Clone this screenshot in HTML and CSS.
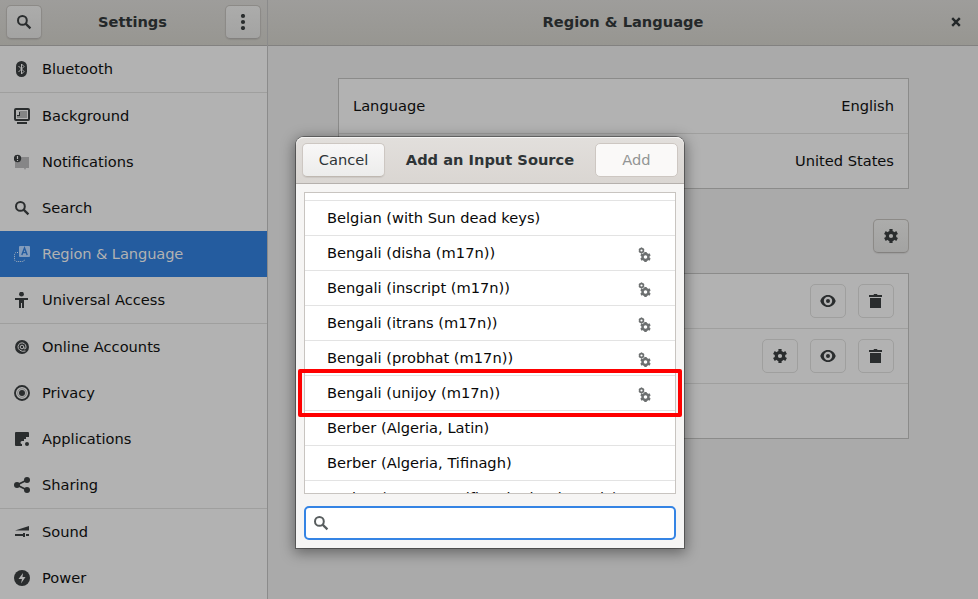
FILE: index.html
```html
<!DOCTYPE html>
<html lang="en">

<head>
    <meta charset="UTF-8">
    <meta name="viewport" content="width=device-width, initial-scale=1.0">
    <title>Region &amp; Language</title>
    <link rel="stylesheet" href="styles.css">
</head>

<body>
    <!-- shared icon shapes -->
    <svg class="sprite" aria-hidden="true">
        <symbol id="i-search" viewBox="0 0 16 16">
            <circle cx="6.4" cy="6.4" r="4.4" fill="none" stroke="currentColor" stroke-width="2" />
            <path d="M9.6 9.6 14.4 14.4" fill="none" stroke="currentColor" stroke-width="2.2" />
        </symbol>
        <symbol id="i-gear" viewBox="0 0 16 16">
            <circle cx="8" cy="8" r="3.7" fill="none" stroke="currentColor" stroke-width="3.2" />
            <path d="M8 1v2.5M8 12.5V15M1.9 4.5l2.2 1.3M11.9 10.2l2.2 1.3M1.9 11.5l2.2-1.3M11.9 5.8l2.2-1.3" fill="none" stroke="currentColor" stroke-width="3.2" />
        </symbol>
        <symbol id="i-gears" viewBox="0 0 14 16">
            <circle cx="3.5" cy="3.500" r="1.900" fill="none" stroke="currentColor" stroke-width="1.600" />
            <path d="M3.500.5v1M3.500 5.500v1M.9 2l.9.5M5.200 4.500l.9.5M.9 5l.9-.5M5.200 2.500l.9-.5" stroke="currentColor" stroke-width="1.400" />
            <circle cx="7.500" cy="10" r="3" fill="none" stroke="currentColor" stroke-width="2.400" />
            <path d="M7.500 5v2M7.500 13v2M2.900 7.400l1.800 1M10.300 11.600l1.800 1M2.900 12.600l1.800-1M10.300 8.400l1.800-1" stroke="currentColor" stroke-width="2.400" />
        </symbol>
        <symbol id="i-eye" viewBox="0 0 16 16">
            <path fill="currentColor" fill-rule="evenodd" d="M8 2C4.200 2 1.400 4.400.3 8c1.100 3.600 3.900 6 7.700 6s6.600-2.400 7.700-6C14.600 4.400 11.800 2 8 2zm0 1.800a4.200 4.200 0 1 1 0 8.400 4.200 4.200 0 0 1 0-8.400zm0 2.200a2 2 0 1 0 0 4 2 2 0 0 0 0-4z" />
        </symbol>
        <symbol id="i-trash" viewBox="0 0 16 16">
            <path fill="currentColor" d="M1 4V2h4.500L6 1h3l.5 1H14v2zM2 5h11v10H2z" />
        </symbol>
    </svg>

    <div class="window">
        <div class="sidebar">
            <div class="headerbar">
                <div class="btn"><svg class="icon"><use href="#i-search" /></svg></div>
                <h1>Settings</h1>
                <div class="btn">
                    <svg class="icon" viewBox="0 0 16 16" fill="currentColor"><circle cx="8" cy="2" r="2.1" /><circle cx="8" cy="8" r="2.1" /><circle cx="8" cy="14" r="2.1" /></svg>
                </div>
            </div>
            <ul class="nav">
                <li class="sep">
                    <svg class="icon" viewBox="0 0 16 16"><rect x="2" y="0" width="11" height="16" rx="5.5" fill="currentColor" /><path d="M4.500 5 10 10.500 7.500 13V3L10 5.500 4.500 11" fill="none" stroke="#b2b2b2" stroke-width="1" /></svg>
                    <span>Bluetooth</span>
                </li>
                <li>
                    <svg class="icon" viewBox="0 0 16 16"><rect x="1" y="1" width="14" height="11" rx="1" fill="none" stroke="currentColor" stroke-width="2" /><path d="M3 14h10v2H3z" fill="currentColor" /><path d="M4 3h9v7H3V8h3V4z" fill="currentColor" opacity=".35" /><path d="M6 4v4H3V7h2V4z" fill="currentColor" /></svg>
                    <span>Background</span>
                </li>
                <li>
                    <svg class="icon" viewBox="0 0 16 16"><path d="M7 3h8v11h-3l-1 2-1-2H1V8h4z" fill="currentColor" opacity=".32" /><circle cx="3.500" cy="4.500" r="3.700" fill="currentColor" /><path d="M3.500 2v3M3.500 6v1" stroke="#b2b2b2" stroke-width="1.200" /></svg>
                    <span>Notifications</span>
                </li>
                <li>
                    <svg class="icon"><use href="#i-search" /></svg>
                    <span>Search</span>
                </li>
                <li class="selected">
                    <svg class="icon" viewBox="0 0 16 16"><rect x="5" y="0" width="11" height="11" rx="1" fill="#a3b2c6" opacity=".75" /><path d="M7.800 9 10.500 2 13.200 9M8.800 6.600h3.500" fill="none" stroke="#245c9f" stroke-width="1.400" /><path d="M4 6.500H2.500Q.5 6.500.5 8.500V13q0 2.500 2.500 2.500h5q2.500 0 2.500-2.500" fill="none" stroke="#a9b2bd" stroke-width="1" stroke-dasharray="1 1" /></svg>
                    <span>Region &amp; Language</span>
                </li>
                <li class="sep">
                    <svg class="icon" viewBox="0 0 16 16" fill="currentColor"><circle cx="7.500" cy="2.200" r="2.400" /><path d="M1 6h13v2h-4v8H8v-5H7v5H5V8H1z" /></svg>
                    <span>Universal Access</span>
                </li>
                <li>
                    <svg class="icon" viewBox="0 0 16 16"><circle cx="8" cy="8" r="7" fill="currentColor" /><path d="M11.500 12Q8 13 5.800 11.200A4 4 0 1 1 12 8q0 2-1.200 2-1 0-1-2" fill="none" stroke="#b2b2b2" /><circle cx="8" cy="8" r="1.800" fill="none" stroke="#b2b2b2" /></svg>
                    <span>Online Accounts</span>
                </li>
                <li>
                    <svg class="icon" viewBox="0 0 16 16"><circle cx="8" cy="8" r="7" fill="none" stroke="currentColor" stroke-width="1.900" /><circle cx="8" cy="8" r="4.300" fill="none" stroke="currentColor" stroke-width=".6" opacity=".6" /><circle cx="8" cy="8" r="3" fill="currentColor" /></svg>
                    <span>Privacy</span>
                </li>
                <li>
                    <svg class="icon" viewBox="0 0 16 16" fill="currentColor"><path d="M2 1h12q1 0 1 1v4h-3v2h-2v2H8q-1.500 0-1.500 1.500T8 13v2H2q-1 0-1-1V2q0-1 1-1z" /><circle cx="13" cy="13" r="2" /></svg>
                    <span>Applications</span>
                </li>
                <li class="sep">
                    <svg class="icon" viewBox="0 0 16 16"><path d="M13 3 3 8l10 5" fill="none" stroke="currentColor" stroke-width="1.800" /><g fill="currentColor"><circle cx="13" cy="3" r="3" /><circle cx="3" cy="8" r="3" /><circle cx="13" cy="13" r="3" /></g></svg>
                    <span>Sharing</span>
                </li>
                <li>
                    <svg class="icon" viewBox="0 0 16 16" fill="currentColor"><path d="M1 6.500 15 2v4.500zM1 10h8v2H1zM9 9h2v4H9zM12 10h3v2h-3z" /></svg>
                    <span>Sound</span>
                </li>
                <li>
                    <svg class="icon" viewBox="0 0 16 16"><circle cx="8" cy="8" r="8" fill="currentColor" /><path d="M9 3 4.500 9H8l-1 4.500L11.500 7H8.500z" fill="#b2b2b2" /></svg>
                    <span>Power</span>
                </li>
            </ul>
        </div>

        <div class="main">
            <div class="headerbar">
                <h1>Region &amp; Language</h1>
                <svg class="close" viewBox="0 0 10 10"><path d="M1.200 1.200l7.600 7.600M8.800 1.200 1.200 8.800" stroke="currentColor" stroke-width="2.400" /></svg>
            </div>
            <div class="content">
                <div class="panel">
                    <div class="panel-row"><span>Language</span><span>English</span></div>
                    <div class="panel-row end"><span>United States</span></div>
                </div>
                <div class="sources-head">
                    <div class="btn"><svg class="icon"><use href="#i-gear" /></svg></div>
                </div>
                <div class="panel">
                    <div class="panel-row end">
                        <div class="flat"><svg class="icon"><use href="#i-eye" /></svg></div>
                        <div class="flat"><svg class="icon"><use href="#i-trash" /></svg></div>
                    </div>
                    <div class="panel-row end">
                        <div class="flat"><svg class="icon"><use href="#i-gear" /></svg></div>
                        <div class="flat"><svg class="icon"><use href="#i-eye" /></svg></div>
                        <div class="flat"><svg class="icon"><use href="#i-trash" /></svg></div>
                    </div>
                    <div class="panel-row"></div>
                </div>
            </div>
        </div>
    </div>

    <div class="dialog">
        <div class="dialog-head">
            <div class="dialog-btn">Cancel</div>
            <h2>Add an Input Source</h2>
            <div class="dialog-btn disabled">Add</div>
        </div>
        <div class="dialog-body">
            <ul class="list">
                <li class="partial"></li>
                <li>Belgian (with Sun dead keys)</li>
                <li>Bengali (disha (m17n))<svg class="gears"><use href="#i-gears" /></svg></li>
                <li>Bengali (inscript (m17n))<svg class="gears"><use href="#i-gears" /></svg></li>
                <li>Bengali (itrans (m17n))<svg class="gears"><use href="#i-gears" /></svg></li>
                <li>Bengali (probhat (m17n))<svg class="gears"><use href="#i-gears" /></svg></li>
                <li>Bengali (unijoy (m17n))<svg class="gears"><use href="#i-gears" /></svg></li>
                <li>Berber (Algeria, Latin)</li>
                <li>Berber (Algeria, Tifinagh)</li>
                <li>Berber (Morocco, Tifinagh alt. phonetic)</li>
            </ul>
            <div class="search"><svg class="icon"><use href="#i-search" /></svg></div>
        </div>
        <div class="highlight"></div>
    </div>
</body>

</html>
```

FILE: styles.css
```css
* {
    box-sizing: border-box;
}

body {
    margin: 0;
    width: 978px;
    height: 599px;
    overflow: hidden;
    position: relative;
    background: #aaaaaa;
    font-family: "DejaVu Sans", sans-serif;
    font-size: 14.64px;
    color: #0c0c0c;
}

h1,
h2 {
    margin: 0;
    font-size: 14.64px;
    font-weight: bold;
    color: #242829;
}

ul {
    margin: 0;
    padding: 0;
    list-style: none;
}

.sprite {
    position: absolute;
    width: 0;
    height: 0;
}

.icon {
    display: block;
    flex: none;
    width: 16px;
    height: 16px;
    color: #2a2d2e;
}

.window {
    display: flex;
    width: 978px;
    height: 599px;
}

.sidebar {
    width: 268px;
    height: 599px;
    flex: none;
    border-right: 1px solid #8b8b8b;
    background: #b2b2b2;
}

.headerbar {
    display: flex;
    align-items: center;
    justify-content: space-between;
    height: 46px;
    padding: 0 6px 2px;
    border-bottom: 1px solid #828180;
    background: linear-gradient(#9e9d9b, #979691);
}

.sidebar h1 {
    padding-right: 2px;
}

.btn {
    display: flex;
    align-items: center;
    justify-content: center;
    width: 36px;
    height: 34px;
    border: 1px solid #8c8a87;
    border-bottom-color: #83817f;
    border-radius: 5px;
    background: linear-gradient(#acacab, #a3a3a2);
    box-shadow: 0 1px 1px rgba(0, 0, 0, 0.08);
}

.nav li {
    display: flex;
    align-items: center;
    gap: 12px;
    height: 46px;
    padding-left: 14px;
}

.nav span {
    padding-bottom: 2px;
}

.nav li.sep {
    height: 47px;
    border-bottom: 1px solid #9f9f9e;
}

.nav li.selected {
    background: #245c9f;
    color: #b2b2b2;
    letter-spacing: -0.1px;
}

.main {
    flex: 1;
}

.main .headerbar {
    padding-left: 0;
    padding-right: 17px;
}

.main h1 {
    flex: 1;
    padding-left: 27px;
    text-align: center;
}

.close {
    width: 10px;
    height: 10px;
    color: #242829;
}

.content {
    width: 571px;
    margin: 32px 0 0 70px;
}

.panel {
    border: 1px solid #8b8b8a;
    background: #b2b2b2;
}

.panel-row {
    display: flex;
    align-items: center;
    justify-content: space-between;
    height: 54px;
    padding: 0 14px;
}

.panel-row span {
    padding-bottom: 2px;
}

.panel-row + .panel-row {
    height: 55px;
    border-top: 1px solid #9f9f9e;
}

.panel-row.end {
    justify-content: flex-end;
    gap: 12px;
}

.sources-head {
    display: flex;
    justify-content: flex-end;
    padding: 30px 0 20px;
}

.flat {
    display: flex;
    align-items: center;
    justify-content: center;
    width: 36px;
    height: 34px;
    border: 1px solid #9f9f9e;
    border-radius: 5px;
}

/* modal dialog */
.dialog {
    position: absolute;
    left: 296px;
    top: 137px;
    width: 388px;
    height: 411px;
    border-radius: 8px 8px 0 0;
    background: #f6f5f4;
    box-shadow: 0 0 0 1px rgba(0, 0, 0, 0.35), 0 3px 14px 2px rgba(0, 0, 0, 0.4);
}

.dialog-head {
    display: flex;
    align-items: center;
    justify-content: space-between;
    height: 47px;
    padding: 0 6px 1px;
    border-bottom: 1px solid #b5b0ac;
    border-radius: 8px 8px 0 0;
    background: linear-gradient(#e2dfdc, #dad6d2);
    box-shadow: inset 0 1px #f5f4f3;
}

.dialog h2 {
    color: #2e3436;
}

.dialog-btn {
    display: flex;
    align-items: center;
    justify-content: center;
    width: 83px;
    height: 34px;
    border: 1px solid #cdc7c2;
    border-bottom-color: #bfb8b1;
    border-radius: 5px;
    background: linear-gradient(#f8f7f7, #ececeb);
    box-shadow: 0 1px 1px rgba(0, 0, 0, 0.07);
    color: #2e3436;
}

.dialog-btn.disabled {
    border-color: #cdc7c2;
    background: #faf9f8;
    box-shadow: none;
    color: #929595;
}

.dialog-body {
    padding: 8px;
}

.list {
    height: 302px;
    border: 1px solid #c8c4c0;
    background: #ffffff;
    overflow: hidden;
}

.list li {
    display: flex;
    align-items: center;
    justify-content: space-between;
    height: 35px;
    padding: 0 23px 2px 22px;
    border-bottom: 1px solid #e3e3e3;
    color: #080808;
}

.list li.partial {
    height: 8px;
}

.gears {
    width: 14px;
    height: 16px;
    margin-top: 5px;
    color: #6d7071;
}

.search {
    display: flex;
    align-items: center;
    height: 34px;
    margin-top: 12px;
    padding-left: 7px;
    border: 2px solid #3584e4;
    border-radius: 5px;
    background: #ffffff;
}

.search .icon {
    color: #585d5e;
}

/* red marker around the chosen source */
.highlight {
    position: absolute;
    left: 2px;
    top: 232px;
    width: 384px;
    height: 48px;
    border: 4px solid #ff0000;
    border-radius: 2px;
}
```
